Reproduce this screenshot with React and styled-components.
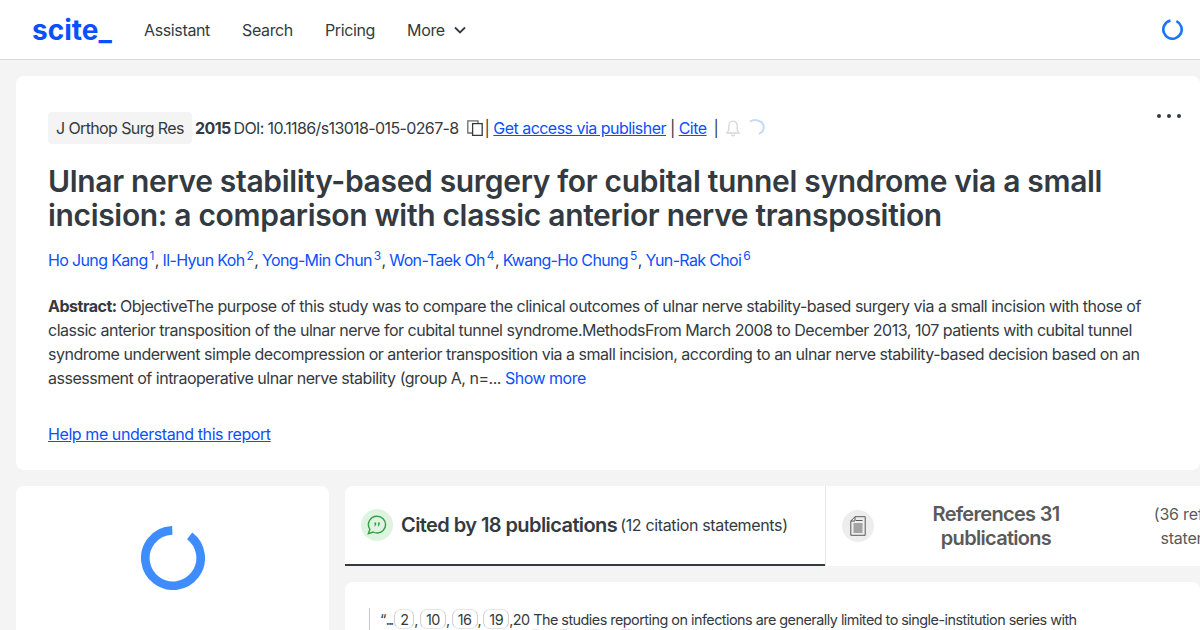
import React from "react";
import styled, { createGlobalStyle } from "styled-components";

const GlobalStyle = createGlobalStyle`
  html, body {
    margin: 0;
    height: 630px;
    overflow: hidden;
    background: #f4f4f4;
    font-family: Inter, "Liberation Sans", sans-serif;
    color: #333a41;
  }
  * { box-sizing: border-box; }
`;

function Spinner({ size, stroke, color, gap = 44, rotate = 0 }) {
  const r = 50 - stroke / 2;
  const len = 2 * Math.PI * r;
  const dash = (len * (360 - gap)) / 360;
  return (
    <svg width={size} height={size} viewBox="0 0 100 100">
      <circle
        cx="50"
        cy="50"
        r={r}
        fill="none"
        stroke={color}
        strokeWidth={stroke}
        strokeDasharray={`${dash} ${len - dash}`}
        transform={`rotate(${rotate} 50 50)`}
      />
    </svg>
  );
}

function Chevron() {
  return (
    <svg width="12" height="8" viewBox="0 0 12 8" fill="none">
      <path d="M1 1.5 6 6.5 11 1.5" stroke="#333a41" strokeWidth="1.8" />
    </svg>
  );
}

function CopyIcon() {
  return (
    <svg width="16" height="16" viewBox="0 0 16 16" fill="none">
      <path d="M5 13H.8V.8H11V3" stroke="#6b6b6b" strokeWidth="1.3" />
      <rect x="5.6" y="3.6" width="9.6" height="11.8" stroke="#333a41" strokeWidth="1.3" />
    </svg>
  );
}

function BellIcon() {
  return (
    <svg width="14" height="17" viewBox="0 0 14 17" fill="none">
      <path
        d="M7 1.2c-2.6 0-4.2 2-4.2 4.8v3.9L1 13h12l-1.8-3.1V6C11.2 3.2 9.6 1.2 7 1.2Z"
        stroke="#d6d6d6"
        strokeWidth="1.3"
      />
      <path d="M5.3 14.6c.3.8.9 1.3 1.7 1.3s1.4-.5 1.7-1.3" stroke="#d6d6d6" strokeWidth="1.3" />
    </svg>
  );
}

function SmallArc() {
  return (
    <svg width="16" height="16" viewBox="0 0 16 16" fill="none">
      <path d="M1 2.6C3 1.4 6 .8 8.5 1.4 12.4 2.2 14.8 5 14.8 8.5 14.8 11 13 13.5 10 14.8" stroke="#c4d9fb" strokeWidth="2" />
    </svg>
  );
}

function QuoteBubble() {
  return (
    <svg width="20" height="20" viewBox="0 0 20 20" fill="none">
      <path
        d="M10.2 1.2a8.4 8.4 0 0 1 0 16.8c-1.5 0-2.9-.4-4-1L1.4 18.6l1.5-4.3a8.4 8.4 0 0 1 7.3-13.1Z"
        stroke="#2f9e44"
        strokeWidth="1.4"
      />
      <path d="M7.4 7.6h1.8v1.6l-1 2H7.3l.7-1.8h-.6ZM11 7.6h1.8v1.6l-1 2h-.9l.7-1.8H11Z" fill="#2f9e44" />
    </svg>
  );
}

function DocIcon() {
  return (
    <svg width="16" height="20" viewBox="0 0 16 20" fill="none">
      <path d="M5 .7h10.2v18.6H.8V5Z" stroke="#5a5a5a" strokeWidth="1" />
      <path d="M5 .7V5H.8" stroke="#5a5a5a" strokeWidth="1" />
      <path d="M6 4.5h6.5M3.5 8h9M3.5 10h9M3.5 12h9M3.5 14h9M3.5 16h9" stroke="#5a5a5a" strokeWidth="1" />
    </svg>
  );
}

const authors = [
  ["Ho Jung Kang", 1],
  ["Il-Hyun Koh", 2],
  ["Yong-Min Chun", 3],
  ["Won-Taek Oh", 4],
  ["Kwang-Ho Chung", 5],
  ["Yun-Rak Choi", 6],
];

export default function App() {
  return (
    <>
      <GlobalStyle />
      <Header>
        <Logo>scite_</Logo>
        <Nav>
          <NavItem>Assistant</NavItem>
          <NavItem>Search</NavItem>
          <NavItem>Pricing</NavItem>
          <NavItem>
            More <Chevron />
          </NavItem>
        </Nav>
        <HeaderSpinner>
          <Spinner size={21} stroke={12.5} color="#1a76f2" gap={40} rotate={-65} />
        </HeaderSpinner>
      </Header>

      <Page>
        <ReportCard>
          <MoreMenu>
            <Dot />
            <Dot />
            <Dot />
          </MoreMenu>
          <MetaRow>
            <Journal>J Orthop Surg Res</Journal>
            <Year>2015</Year>
            <span>DOI: 10.1186/s13018-015-0267-8</span>
            <CopyWrap>
              <CopyIcon />
            </CopyWrap>
            <span>|</span>
            <MetaLink>Get access via publisher</MetaLink>
            <span>|</span>
            <MetaLink>Cite</MetaLink>
            <Bar>|</Bar>
            <BellIcon />
            <ArcWrap>
              <SmallArc />
            </ArcWrap>
          </MetaRow>
          <Title>
            Ulnar nerve stability-based surgery for cubital tunnel syndrome via a small incision: a
            comparison with classic anterior nerve transposition
          </Title>
          <Authors>
            {authors.map(([name, n], i) => (
              <React.Fragment key={name}>
                {i > 0 && ", "}
                <Link>
                  {name}
                  <Sup>{n}</Sup>
                </Link>
              </React.Fragment>
            ))}
          </Authors>
          <Abstract>
            <strong>Abstract: </strong>
            ObjectiveThe purpose of this study was to compare the clinical outcomes of ulnar nerve
            stability-based surgery via a small incision with those of classic anterior transposition
            of the ulnar nerve for cubital tunnel syndrome.MethodsFrom March 2008 to December 2013, 107
            patients with cubital tunnel syndrome underwent simple decompression or anterior
            transposition via a small incision, according to an ulnar nerve stability-based decision
            based on an assessment of intraoperative ulnar nerve stability (group A, n=... <Link>Show more</Link>
          </Abstract>
          <HelpRow>
            <Link $underline>Help me understand this report</Link>
          </HelpRow>
        </ReportCard>

        <Lower>
          <Sidebar>
            <Spinner size={64} stroke={13.5} color="#3f8cff" gap={39} rotate={-53} />
          </Sidebar>
          <Main>
            <Tabs>
              <Tab $active>
                <TabIcon $bg="#def4e0">
                  <QuoteBubble />
                </TabIcon>
                <ActiveTitle>Cited by 18 publications</ActiveTitle>
                <ActiveCount>(12 citation statements)</ActiveCount>
              </Tab>
              <Tab>
                <TabIcon $bg="#ededed">
                  <DocIcon />
                </TabIcon>
                <TabTitle>References 31 publications</TabTitle>
                <TabCount>(36 reference statements)</TabCount>
              </Tab>
            </Tabs>
            <Statements>
              <Quote>
                “<Dots>...</Dots>
                <Ref $width={20}>2</Ref>,<Ref $width={26}>10</Ref>,<Ref $width={26}>16</Ref>,
                <Ref $width={26}>19</Ref>,20 The studies reporting on infections are generally
                limited to single-institution series with
                <NextLineRefs>
                  <Ref $width={15} />
                  <Ref $width={17} />
                  <Ref $width={18} />
                  <Ref $width={19} />
                </NextLineRefs>
              </Quote>
            </Statements>
          </Main>
        </Lower>
      </Page>
    </>
  );
}

const Header = styled.header`
  height: 60px;
  background: #fff;
  border-bottom: 1px solid #d9d9d9;
  display: flex;
  align-items: center;
  padding: 0 17px 0 32px;
`;

const Logo = styled.div`
  color: #0b50ff;
  font-size: 28px;
  font-weight: 700;
  width: 112px;
`;

const Nav = styled.nav`
  display: flex;
  gap: 32px;
  flex: 1;
`;

const NavItem = styled.div`
  font-size: 16px;
  display: flex;
  align-items: center;
  gap: 9px;
  letter-spacing: -0.36px;
`;

const HeaderSpinner = styled.div`
  display: flex;
`;

const Page = styled.main`
  padding: 16px 0 0 16px;
  display: flex;
  flex-direction: column;
  gap: 16px;
`;

const ReportCard = styled.section`
  position: relative;
  height: 394px;
  background: #fff;
  border-radius: 8px;
  padding: 36px 48px 0 32px;
`;

const MoreMenu = styled.div`
  position: absolute;
  top: 38px;
  right: 19px;
  display: flex;
  gap: 6px;
`;

const Dot = styled.span`
  width: 4px;
  height: 4px;
  border-radius: 50%;
  background: #333a41;
`;

const MetaRow = styled.div`
  display: flex;
  align-items: center;
  font-size: 16px;
  letter-spacing: -0.62px;
  gap: 4px;
  height: 32px;
`;

const Journal = styled.span`
  background: #f4f4f4;
  border-radius: 4px;
  height: 32px;
  width: 144px;
  padding: 0 8px;
  display: flex;
  align-items: center;
`;

const Year = styled.strong`
  font-weight: 700;
  margin: 0 -1px 0 -1px;
`;

const CopyWrap = styled.span`
  display: flex;
  margin: 0 -2px 0 4px;
`;

const Link = styled.a`
  color: #0b50ff;
  text-decoration: ${(p) => (p.$underline ? "underline" : "none")};
`;

const MetaLink = styled(Link)`
  text-decoration: underline;
  letter-spacing: -0.53px;
`;

const Bar = styled.span`
  margin: 0 4px 0 3px;
`;

const ArcWrap = styled.span`
  display: flex;
  margin: -3px 0 0 5px;
`;

const Title = styled.h1`
  margin: 20px 0 0;
  font-size: 30px;
  line-height: 34px;
  font-weight: 600;
  letter-spacing: -0.33px;
`;

const Authors = styled.div`
  margin-top: 16px;
  font-size: 16px;
  line-height: 24px;
  letter-spacing: -0.65px;
`;

const Sup = styled.sup`
  font-size: 12px;
  line-height: 0;
  margin: 0 1px 0 2px;
`;

const Abstract = styled.p`
  margin: 22px 0 0;
  font-size: 16px;
  line-height: 24px;
  letter-spacing: -0.49px;

  strong {
    font-weight: 700;
  }
`;

const HelpRow = styled.div`
  margin-top: 32px;
  font-size: 16px;
  line-height: 24px;
  letter-spacing: -0.42px;
`;

const Lower = styled.div`
  display: grid;
  grid-template-columns: 313px minmax(0, 1fr);
  gap: 16px;
`;

const Sidebar = styled.aside`
  background: #fff;
  border-radius: 8px;
  height: 300px;
  display: flex;
  justify-content: center;
  padding: 40px 0 0 0;
`;

const Main = styled.div`
  display: flex;
  flex-direction: column;
  gap: 16px;
  min-width: 0;
`;

const Tabs = styled.div`
  display: flex;
  overflow: hidden;
  background: #fff;
  height: 80px;
  border-radius: 8px 0 0 0;
`;

const Tab = styled.div`
  flex: 0 0 480px;
  display: flex;
  align-items: center;
  padding: 0 16px;
  border-left: ${(p) => (p.$active ? "none" : "1px solid #e6e6e6")};
  border-bottom: ${(p) => (p.$active ? "2px solid #333a41" : "none")};
`;

const TabIcon = styled.span`
  flex: none;
  width: 32px;
  height: 32px;
  border-radius: 50%;
  background: ${(p) => p.$bg};
  display: flex;
  align-items: center;
  justify-content: center;
`;

const ActiveTitle = styled.span`
  margin-left: 8px;
  font-size: 20px;
  font-weight: 600;
  letter-spacing: -0.58px;
  white-space: nowrap;
`;

const ActiveCount = styled.span`
  margin-left: 3px;
  font-size: 16px;
  letter-spacing: -0.35px;
  white-space: nowrap;
`;

const TabTitle = styled.span`
  flex: 0 0 228px;
  margin-left: 8px;
  font-size: 20px;
  line-height: 24px;
  font-weight: 600;
  letter-spacing: -0.7px;
  color: #5a5a5a;
  text-align: center;
`;

const TabCount = styled.span`
  flex: 0 0 140px;
  margin-left: 24px;
  font-size: 16px;
  line-height: 24px;
  letter-spacing: -0.2px;
  color: #5a5a5a;
  text-align: center;
`;

const Statements = styled.section`
  background: #fff;
  border-radius: 8px;
  padding: 26px 24px 0;
  height: 200px;
`;

const Quote = styled.div`
  border-left: 1px solid #c8c8c8;
  padding-left: 10px;
  font-size: 14.4px;
  line-height: 24px;
  letter-spacing: -0.52px;
`;

const Dots = styled.span`
  letter-spacing: -2px;
`;

const Ref = styled.span`
  display: inline-block;
  min-width: ${(p) => p.$width}px;
  height: 20px;
  margin-left: 2px;
  border: 1px solid #e6e6e6;
  border-left-color: #cfcfcf;
  border-right-color: #cfcfcf;
  border-radius: 7px;
  padding: 0 4px;
  line-height: 19px;
  text-align: center;
`;

const NextLineRefs = styled.div`
  display: flex;
  gap: 11px;
  padding-left: 146px;
  margin-top: -3px;
`;
